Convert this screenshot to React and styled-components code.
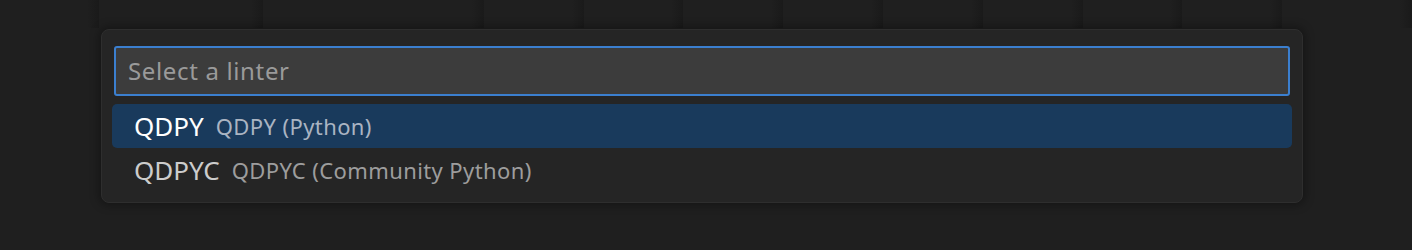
import React from 'react'
import styled, { createGlobalStyle } from 'styled-components'

const GlobalStyle = createGlobalStyle`
  html, body {
    margin: 0;
    padding: 0;
    background: #1f1f1f;
    font-family: "Noto Sans", "Open Sans", sans-serif;
  }
`

const tabs = [99, 164, 221, 100, 99, 100, 100, 100, 100, 99, 100, 130]

const items = [
  { label: 'QDPY', description: 'QDPY (Python)' },
  { label: 'QDPYC', description: 'QDPYC (Community Python)' },
]

const App = () => {
  return (
    <Page>
      <GlobalStyle />
      <TabStrip>
        {tabs.map((w, i) => (
          <Tab key={i} style={{ width: w }} />
        ))}
      </TabStrip>
      <Editor />
      <QuickInput>
        <InputBox placeholder="Select a linter" />
        <List>
          {items.map((item, i) => (
            <Row key={item.label} selected={i === 0}>
              <Label selected={i === 0}>{item.label}</Label>
              <Description selected={i === 0}>{item.description}</Description>
            </Row>
          ))}
        </List>
      </QuickInput>
    </Page>
  )
}

export default App

const Page = styled.div`
  position: relative;
  width: 1412px;
  height: 250px;
  overflow: hidden;
  background: #1f1f1f;
`

const TabStrip = styled.div`
  display: flex;
  height: 28px;
  background: #1e1e1e;
`

const Tab = styled.div`
  flex-shrink: 0;
  height: 100%;
  background: linear-gradient(to right, #1f1f1f 0, #1f1f1f calc(100% - 12px), #1a1a1a 100%);
`

const Editor = styled.div`
  height: 222px;
  background: #1f1f1f;
`

const QuickInput = styled.div`
  position: absolute;
  top: 29px;
  left: 101px;
  width: 1202px;
  height: 174px;
  box-sizing: border-box;
  padding: 16px 10px 0 10px;
  background: #252525;
  border: 1px solid #2e2e2e;
  border-radius: 8px;
  box-shadow: 0 0 10px 2px rgba(0, 0, 0, 0.35);
  display: flex;
  flex-direction: column;
`

const InputBox = styled.input`
  box-sizing: border-box;
  height: 50px;
  margin: 0 2px;
  padding: 0 12px 2px;
  background: #3c3c3c;
  border: 2px solid #3b7fcf;
  border-radius: 3px;
  outline: none;
  font-family: inherit;
  font-size: 24px;
  letter-spacing: 0.65px;
  color: #cccccc;
  &::placeholder {
    color: #9a9a9a;
  }
`

const List = styled.div`
  display: flex;
  flex-direction: column;
  margin-top: 8px;
`

const Row = styled.div`
  display: flex;
  align-items: center;
  gap: 12px;
  height: 44px;
  padding: 0 22px;
  border-radius: 5px;
  background: ${p => (p.selected ? '#193a5c' : 'transparent')};
`

const Label = styled.span`
  font-size: 26px;
  color: ${p => (p.selected ? '#ffffff' : '#cccccc')};
`

const Description = styled.span`
  font-size: 22px;
  letter-spacing: 0.4px;
  color: ${p => (p.selected ? '#aab4c2' : '#9d9d9d')};
`
